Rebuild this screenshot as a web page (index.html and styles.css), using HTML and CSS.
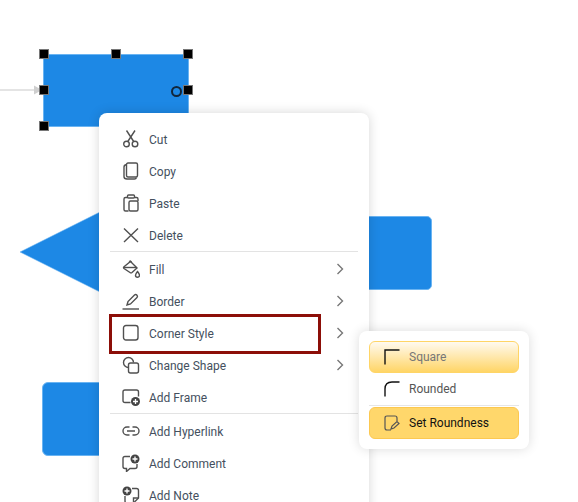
FILE: index.html
```html
<!DOCTYPE html>
<html lang="en">
<head>
    <meta charset="UTF-8">
    <title>Diagram editor - corner style menu</title>
    <link rel="stylesheet" href="styles.css">
</head>
<body>
    <div class="canvas">
        <!-- shapes on the canvas -->
        <svg class="connector" width="44" height="12" viewBox="0 0 44 12">
            <path d="M0 6H36" stroke="#e4e4e4" stroke-width="2" fill="none"/>
            <path d="M34 1.500L42 6L34 10.500Z" fill="#cfcfcf"/>
        </svg>
        <div class="shape shape-selected"></div>
        <div class="shape shape-arrow-body"></div>
        <svg class="shape-triangle" width="100" height="84" viewBox="0 0 100 84">
            <path d="M0 42L100 -8V92Z" fill="#1d88e5" stroke="#6ab4f2" stroke-width="0.500"/>
        </svg>
        <div class="shape shape-lower"></div>

        <span class="handle h-tl"></span>
        <span class="handle h-tc"></span>
        <span class="handle h-tr"></span>
        <span class="handle h-ml"></span>
        <span class="handle h-mr"></span>
        <span class="handle h-bl"></span>
        <span class="rotate-dot"></span>

        <!-- context menu -->
        <div class="menu">
            <div class="menu-item">
                <svg class="icon" viewBox="0 0 18 18"><circle cx="4.500" cy="14" r="2.800"/><circle cx="13" cy="14" r="2.800"/><path d="M5.800 11.500L13 0.500M11.700 11.500L4.500 0.500"/></svg>
                <span>Cut</span>
            </div>
            <div class="menu-item">
                <svg class="icon" viewBox="0 0 18 18"><rect x="4.500" y="1" width="11" height="14" rx="1.500"/><path d="M4.500 2.500Q2 3 2 5V14.500Q2 17 5 17H12.500Q14 17 14.500 15.500"/></svg>
                <span>Copy</span>
            </div>
            <div class="menu-item">
                <svg class="icon" viewBox="0 0 18 18"><path d="M5.500 3.500H3.500Q2 3.500 2 5V15.500Q2 17 3.500 17H6.500M12.500 3.500H14.500Q16 3.500 16 5V7"/><rect x="5.500" y="1" width="7" height="3" rx="1"/><rect x="7" y="7" width="9" height="10" rx="1.500"/></svg>
                <span>Paste</span>
            </div>
            <div class="menu-item">
                <svg class="icon" viewBox="0 0 18 18"><path d="M2 2.500L16 16M16 2.500L2 16"/></svg>
                <span>Delete</span>
            </div>
            <div class="menu-divider"></div>
            <div class="menu-item">
                <svg class="icon" viewBox="0 0 18 18"><path d="M8.500 1.500L15 8L10 12.500Q9 13.300 8 12.500L2 8.500Q1 7.500 2 6.700Z"/><path d="M2 7.500H14.500"/><path d="M7 1.500Q8.500 0.500 9.500 2.500"/><path d="M15.500 11.500Q13.500 14 13.500 15.200A2 2 0 0 0 17.500 15.200Q17.500 14 15.500 11.500Z"/></svg>
                <span>Fill</span>
                <svg class="chevron" viewBox="0 0 8 12"><path d="M1.500 1L6.500 6L1.500 11"/></svg>
            </div>
            <div class="menu-item">
                <svg class="icon" viewBox="0 0 18 18"><path d="M5 13L6 9.500L12.500 3Q13.700 2 15 3.200Q16 4.500 15 5.500L8.500 12Z"/><path d="M0.500 17H17"/></svg>
                <span>Border</span>
                <svg class="chevron" viewBox="0 0 8 12"><path d="M1.500 1L6.500 6L1.500 11"/></svg>
            </div>
            <div class="menu-item">
                <svg class="icon" viewBox="0 0 18 18"><rect x="1.500" y="1.500" width="14.500" height="14.500" rx="2.500"/></svg>
                <span>Corner Style</span>
                <svg class="chevron" viewBox="0 0 8 12"><path d="M1.500 1L6.500 6L1.500 11"/></svg>
            </div>
            <div class="menu-item">
                <svg class="icon" viewBox="0 0 18 18"><path d="M6.500 11.500A5 5 0 1 1 11.500 6.500"/><rect x="6.500" y="7" width="10" height="10" rx="2"/></svg>
                <span>Change Shape</span>
                <svg class="chevron" viewBox="0 0 8 12"><path d="M1.500 1L6.500 6L1.500 11"/></svg>
            </div>
            <div class="menu-item">
                <svg class="icon" viewBox="0 0 18 18"><path d="M8.500 14.500H3Q1 14.500 1 12.500V4Q1 2 3 2H14.500Q16.500 2 16.500 4V8.500"/><circle class="icon-solid" cx="13.500" cy="13.500" r="4.500"/><path class="icon-plus" d="M13.500 11V16M11 13.500H16"/></svg>
                <span>Add Frame</span>
            </div>
            <div class="menu-divider"></div>
            <div class="menu-item">
                <svg class="icon" viewBox="0 0 18 18"><path d="M7.500 5H5A4 4 0 0 0 5 13H7.500M10.500 5H13A4 4 0 0 1 13 13H10.500M5 9H13"/></svg>
                <span>Add Hyperlink</span>
            </div>
            <div class="menu-item">
                <svg class="icon" viewBox="0 0 18 18"><path d="M8 2.500H3Q1 2.500 1 4.500V12.500Q1 14.500 3 14.500H4.500V17.500L8 14.500H13Q15 14.500 15 12.500V10"/><circle class="icon-solid" cx="13" cy="5" r="4.500"/><path class="icon-plus" d="M13 2.500V7.500M10.500 5H15.500"/></svg>
                <span>Add Comment</span>
            </div>
            <div class="menu-item">
                <svg class="icon" viewBox="0 0 18 18"><path d="M10 2.500H14.500Q16.500 2.500 16.500 4.500V12L11.500 17H5Q3 17 3 15V10"/><path d="M11.500 17V12H16.500"/><circle class="icon-solid" cx="5" cy="5" r="4.500"/><path class="icon-plus" d="M5 2.500V7.500M2.500 5H7.500"/></svg>
                <span>Add Note</span>
            </div>
        </div>

        <div class="menu-highlight"></div>

        <!-- corner style submenu -->
        <div class="submenu">
            <div class="sub-item sub-hover">
                <svg class="corner-icon" viewBox="0 0 16 16"><path d="M1 15.500V1H15.500"/></svg>
                <span>Square</span>
            </div>
            <div class="sub-item">
                <svg class="corner-icon" viewBox="0 0 16 16"><path d="M1 15.500V8Q1 1 8 1H15.500"/></svg>
                <span>Rounded</span>
            </div>
            <div class="sub-divider"></div>
            <div class="sub-item sub-active">
                <svg class="set-icon" viewBox="0 0 16 16"><path d="M7 15H3Q1 15 1 13V3Q1 1 3 1H11Q13 1 13 3V6"/><path d="M7 14L8 11L13 6.500L15 8.500L10 13Z"/></svg>
                <span>Set Roundness</span>
            </div>
        </div>
    </div>
</body>
</html>
```

FILE: styles.css
```css
body {
    margin: 0;
    background: white;
    font-family: Roboto, "Liberation Sans", sans-serif;
}
.canvas {
    position: relative;
    width: 578px;
    height: 502px;
    overflow: hidden;
    background: white;
}
.connector {
    position: absolute;
    left: 0;
    top: 84px;
}
.shape {
    position: absolute;
    box-sizing: border-box;
    background: #1d88e5;
    border: 1px solid #6ab4f2;
}
.shape-selected {
    left: 43px;
    top: 54px;
    width: 146px;
    height: 73px;
}
.shape-arrow-body {
    left: 300px;
    top: 216px;
    width: 132px;
    height: 74px;
    border-radius: 5px;
}
.shape-triangle {
    position: absolute;
    left: 20px;
    top: 210px;
}
.shape-lower {
    left: 42px;
    top: 382px;
    width: 140px;
    height: 74px;
    border-radius: 6px;
}
.handle {
    position: absolute;
    box-sizing: border-box;
    width: 10px;
    height: 10px;
    background: black;
    border: 1px solid #777;
}
.h-tl { left: 39px; top: 49px; }
.h-tc { left: 111px; top: 49px; }
.h-tr { left: 183px; top: 49px; }
.h-ml { left: 39px; top: 85px; }
.h-mr { left: 183px; top: 85px; }
.h-bl { left: 39px; top: 121px; }
.rotate-dot {
    position: absolute;
    box-sizing: border-box;
    left: 171px;
    top: 86px;
    width: 11px;
    height: 11px;
    border: 2px solid #12263a;
    border-radius: 50%;
}

.menu {
    position: absolute;
    left: 99px;
    top: 113px;
    box-sizing: border-box;
    width: 270px;
    padding: 10px 11px;
    background: white;
    border-radius: 8px;
    box-shadow: 0 0 12px rgba(0,0,0,0.16);
}
.menu-item {
    display: flex;
    align-items: center;
    height: 32px;
    padding-left: 12px;
    font-size: 12px;
    color: #44505e;
}
.menu-item span {
    margin-top: 1px;
}
.menu-item .icon {
    width: 18px;
    height: 18px;
    margin-right: 9px;
    flex: none;
}
.icon path, .icon circle, .icon rect {
    fill: none;
    stroke: #505050;
    stroke-width: 1.400;
}
.icon .icon-solid {
    fill: #444;
    stroke: none;
}
.icon .icon-plus {
    stroke: white;
    stroke-width: 1.300;
}
.chevron {
    width: 8px;
    height: 12px;
    margin-left: auto;
    margin-right: 14px;
    fill: none;
    stroke: #777;
    stroke-width: 1.400;
}
.menu-divider {
    height: 1px;
    margin-bottom: 1px;
    background: #e3e3e3;
}
.menu-highlight {
    position: absolute;
    left: 109px;
    top: 314px;
    box-sizing: border-box;
    width: 212px;
    height: 40px;
    border: 3px solid #8c0e08;
}

.submenu {
    position: absolute;
    left: 359px;
    top: 331px;
    box-sizing: border-box;
    width: 170px;
    height: 118px;
    padding: 10px;
    background: white;
    border-radius: 8px;
    box-shadow: 0 0 12px rgba(0,0,0,0.14);
}
.sub-item {
    display: flex;
    align-items: center;
    box-sizing: border-box;
    height: 32px;
    padding-left: 14px;
    border: 1px solid transparent;
    border-radius: 6px;
    font-size: 12px;
    color: #555;
}
.sub-hover {
    background: linear-gradient(#fffaf0, #ffd566);
    border-color: #ffd566;
    color: #777;
}
.sub-active {
    background: #ffd76b;
    border-color: #fcc850;
    color: #111;
}
.corner-icon {
    width: 16px;
    height: 16px;
    margin-right: 9px;
    fill: none;
    stroke: #111;
    stroke-width: 1.400;
}
.set-icon {
    width: 16px;
    height: 16px;
    margin-right: 9px;
    fill: none;
    stroke: #555;
    stroke-width: 1.200;
}
.sub-divider {
    height: 1px;
    margin-bottom: 1px;
    background: #e6e6e6;
}
```
